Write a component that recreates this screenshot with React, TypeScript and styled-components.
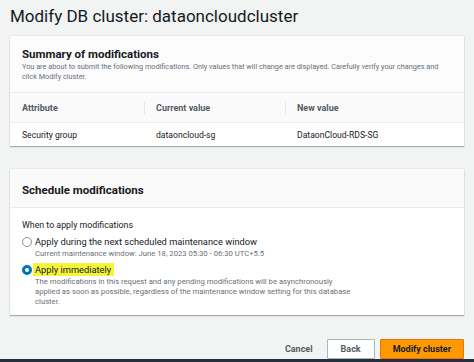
import React from 'react';
import styled, { createGlobalStyle } from 'styled-components';

const GlobalStyle = createGlobalStyle`
  html, body {
    margin: 0;
    padding: 0;
    background: #f2f3f3;
  }
  body {
    font-family: Roboto, "Open Sans", Arial, sans-serif;
    color: #16191f;
  }
`;

const Page = styled.div`
  width: 474px;
  height: 362px;
  display: flex;
  flex-direction: column;
  overflow: hidden;
  background: #f2f3f3;
`;

const Main = styled.div`
  flex: 1;
  padding: 0 10px;
  display: flex;
  flex-direction: column;
`;

const Title = styled.h1`
  margin: 0;
  height: 36px;
  display: flex;
  align-items: center;
  font-size: 17px;
  font-weight: 400;
  color: #16191f;
  padding-bottom: 4px;
  box-sizing: border-box;
`;

const Card = styled.section`
  background: #fff;
  box-shadow: 0 1px 1px rgba(0, 22, 41, 0.3), 0 0 1px rgba(0, 22, 41, 0.2);
  margin-bottom: 23px;
`;

const CardHeader = styled.div<{ $tall?: boolean }>`
  background: ${(p) => (p.$tall ? '#fafafa' : '#fcfcfc')};
  padding: 11px 12px 0;
  height: ${(p) => (p.$tall ? '39px' : '57px')};
  box-sizing: border-box;
  border-bottom: 1px solid #eaeded;
`;

const CardTitle = styled.h2<{ $center?: boolean }>`
  margin: 0;
  font-size: 11.5px;
  font-weight: 700;
  line-height: ${(p) => (p.$center ? '16px' : '14px')};
  padding-top: ${(p) => (p.$center ? '2px' : '0')};
`;

const Description = styled.p`
  margin: 1px 0 0;
  font-size: 7.3px;
  line-height: 10px;
  color: #687078;
`;

const Table = styled.div`
  display: grid;
  grid-template-columns: 134px 141px 1fr;
`;

const HeadCell = styled.div<{ $divider?: boolean }>`
  height: 29px;
  display: flex;
  align-items: center;
  padding-left: 12px;
  font-size: 9px;
  font-weight: 700;
  color: #545b64;
  background: #fafafa;
  border-bottom: 1px solid #eaeded;
  position: relative;
  &::before {
    content: '';
    display: ${(p) => (p.$divider ? 'block' : 'none')};
    position: absolute;
    left: 0;
    top: 9px;
    height: 12px;
    border-left: 1px solid #e6e8e8;
  }
`;

const Cell = styled.div`
  height: 23px;
  display: flex;
  align-items: center;
  padding-left: 12px;
  font-size: 8.6px;
  color: #16191f;
`;

const Body = styled.div`
  padding: 11px 12px 8px;
`;

const Label = styled.div`
  font-size: 8.8px;
  color: #16191f;
  line-height: 12px;
  margin-bottom: 1px;
`;

const Option = styled.div`
  display: grid;
  grid-template-columns: 13px 1fr;
  column-gap: 0;
  margin-top: 4px;
`;

const Radio = styled.span<{ $checked?: boolean }>`
  width: 10px;
  height: 10px;
  border-radius: 50%;
  box-sizing: border-box;
  margin-top: 2px;
  border: ${(p) => (p.$checked ? '3px solid #0073bb' : '1px solid #879596')};
  background: #fff;
`;

const OptionLabel = styled.div`
  font-size: 9.3px;
  line-height: 14px;
  color: #16191f;
`;

const Highlight = styled.span`
  background: #f5f53a;
  padding: 1px 3px 1px 2px;
  margin-left: -2px;
`;

const OptionHint = styled.div`
  grid-column: 2;
  font-size: 7.7px;
  line-height: 10px;
  color: #687078;
`;

const Actions = styled.div`
  display: flex;
  justify-content: flex-end;
  align-items: center;
  gap: 5px;
  margin-top: 1px;
`;

const Button = styled.button<{ $variant: 'link' | 'normal' | 'primary' }>`
  height: 20px;
  box-sizing: border-box;
  font-family: inherit;
  font-size: 9px;
  font-weight: 700;
  padding: 0 ${(p) => (p.$variant === 'normal' ? '13px' : p.$variant === 'link' ? '8px' : '12px')};
  border-radius: 1px;
  cursor: pointer;
  color: ${(p) => (p.$variant === 'primary' ? '#16191f' : '#545b64')};
  background: ${(p) =>
    p.$variant === 'primary' ? '#ff9900' : p.$variant === 'normal' ? '#fff' : 'transparent'};
  border: ${(p) =>
    p.$variant === 'normal'
      ? '1px solid #aab7b8'
      : p.$variant === 'primary'
        ? '1px solid #ec7211'
        : '1px solid transparent'};
`;

const Footer = styled.div`
  height: 4px;
  background: #232f3e;
`;

export default function App() {
  return (
    <>
      <GlobalStyle />
      <Page>
        <Main>
          <Title>Modify DB cluster: dataoncloudcluster</Title>
          <Card>
            <CardHeader>
              <CardTitle>Summary of modifications</CardTitle>
              <Description>
                You are about to submit the following modifications. Only values that will change are displayed. Carefully verify your changes and click Modify cluster.
              </Description>
            </CardHeader>
            <Table>
              <HeadCell>Attribute</HeadCell>
              <HeadCell $divider>Current value</HeadCell>
              <HeadCell $divider>New value</HeadCell>
              <Cell>Security group</Cell>
              <Cell>dataoncloud-sg</Cell>
              <Cell>DataonCloud-RDS-SG</Cell>
            </Table>
          </Card>
          <Card>
            <CardHeader $tall>
              <CardTitle $center>Schedule modifications</CardTitle>
            </CardHeader>
            <Body>
              <Label>When to apply modifications</Label>
              <Option>
                <Radio />
                <OptionLabel>Apply during the next scheduled maintenance window</OptionLabel>
                <OptionHint>Current maintenance window: June 18, 2023 05:30 - 06:30 UTC+5.5</OptionHint>
              </Option>
              <Option>
                <Radio $checked />
                <OptionLabel>
                  <Highlight>Apply immediately</Highlight>
                </OptionLabel>
                <OptionHint>
                  The modifications in this request and any pending modifications will be asynchronously
                  <br />
                  applied as soon as possible, regardless of the maintenance window setting for this database
                  <br />
                  cluster.
                </OptionHint>
              </Option>
            </Body>
          </Card>
          <Actions>
            <Button $variant="link">Cancel</Button>
            <Button $variant="normal">Back</Button>
            <Button $variant="primary">Modify cluster</Button>
          </Actions>
        </Main>
        <Footer />
      </Page>
    </>
  );
}
